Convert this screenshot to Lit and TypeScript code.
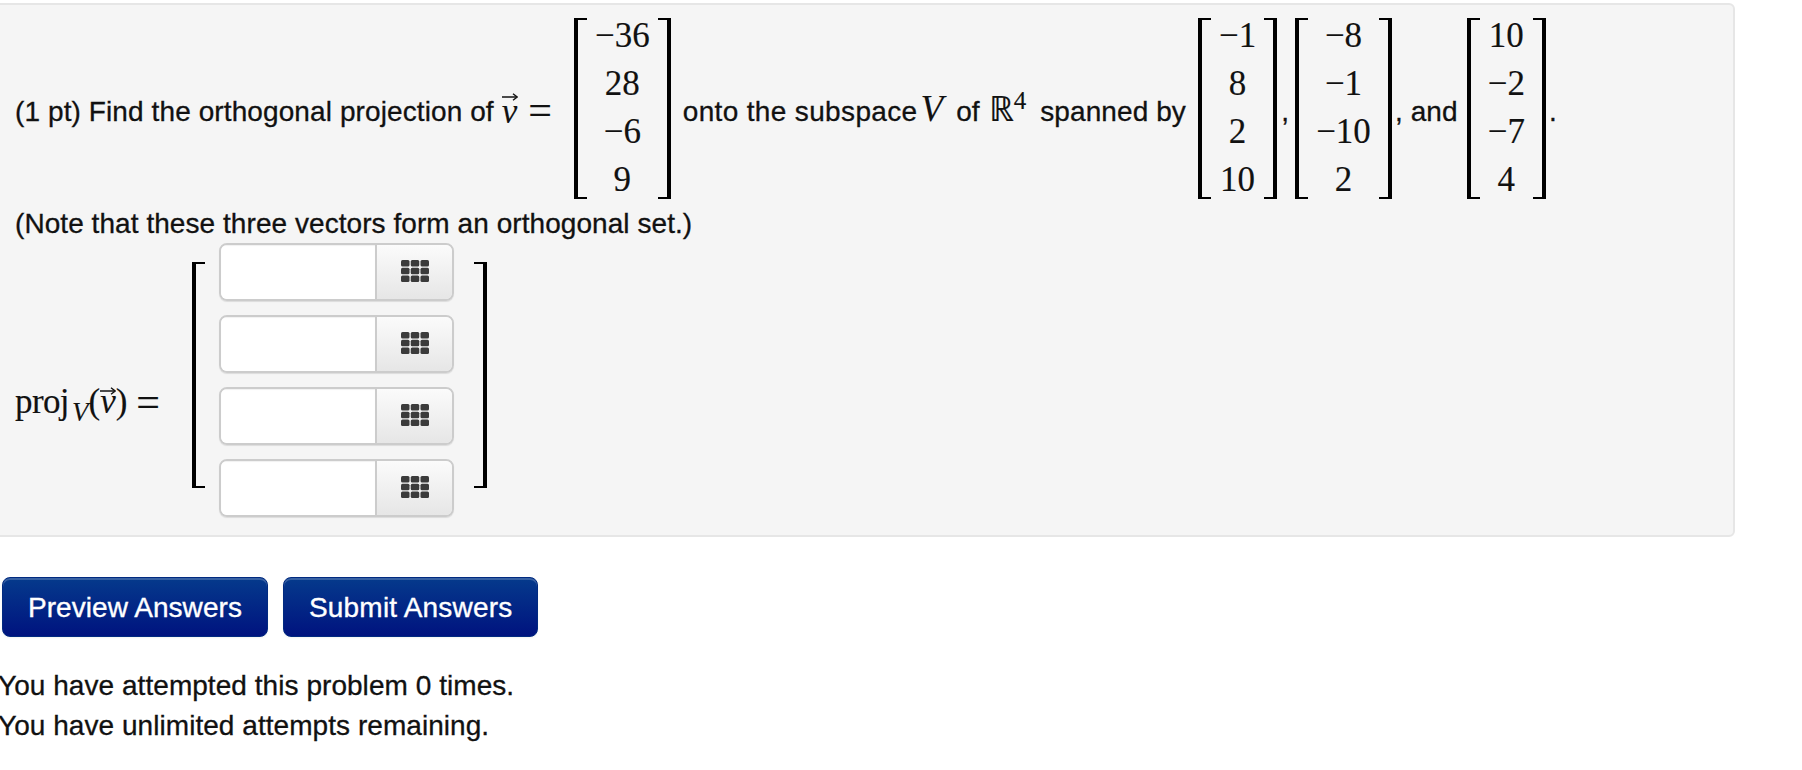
import { LitElement, html, css, svg } from "lit";
import { customElement } from "lit/decorators.js";

const matrix = (rows: string[]) => html`<span class="matrix">
  <span class="br l"></span>
  <span class="rows">${rows.map((r) => html`<span class="cell">${r}</span>`)}</span>
  <span class="br r"></span>
</span>`;

const arrow = html`<svg class="arrow" viewBox="0 0 16 8" aria-hidden="true"><path d="M0 4H14.5" stroke="#111" stroke-width="1.5" fill="none"/><path d="M11 0.8 L15.2 4 L11 7.2" stroke="#111" stroke-width="1.4" fill="none"/></svg>`;

const keypad = html`<svg class="pad" viewBox="0 0 28 22" aria-hidden="true">
  ${[0, 9.75, 19.5].map((x) =>
    [0, 7.75, 15.5].map((y) => svg`<rect x=${x} y=${y} width="8.5" height="6.5" rx="1.5" fill="#3b3b3b"/>`)
  )}
</svg>`;

const answer = html`<div class="group"><div class="input"></div><div class="pick">${keypad}</div></div>`;

@customElement("app-root")
export class AppRoot extends LitElement {
  static styles = css`
    :host {
      display: block;
      font-family: "Liberation Sans", Arial, sans-serif;
      font-size: 28px;
      line-height: 40px;
      letter-spacing: 0.1px;
      color: #111;
      background: #fff;
      height: 770px;
      overflow: hidden;
      -webkit-text-stroke: 0.3px #111;
    }
    .well {
      box-sizing: border-box;
      margin: 3px 0 0 -8px;
      width: 1743px;
      height: 534px;
      padding: 7px 0 0 21px;
      background: #f5f5f5;
      border: 2px solid #e6e6e6;
      border-radius: 6px;
    }
    .line {
      display: flex;
      align-items: center;
    }
    .t {
      box-sizing: content-box;
      height: 40px;
      padding-top: 8px;
      white-space: pre;
    }
    .m {
      font-family: "Liberation Serif", "Times New Roman", serif;
      font-size: 35px;
      line-height: 0;
      letter-spacing: 0;
      -webkit-text-stroke: 0.15px #111;
    }
    .vec {
      position: relative;
      display: inline-block;
      font-style: italic;
      line-height: 40px;
    }
    .arrow {
      position: absolute;
      left: 0;
      top: 1px;
      width: 16px;
      height: 8px;
    }
    .low .arrow {
      top: 5px;
    }
    .eq {
      font-size: 42px;
      vertical-align: -3px;
      line-height: 0;
    }
    .g1 { margin-left: 8px; }
    .g2 { margin-left: 11px; margin-right: 22px; }
    .onto { margin-left: 12px; margin-right: 12px; }
    .wide { letter-spacing: 0.35px; }
    .bigv { font-size: 37px; margin: 0 13px 0 3px; }
    .rr { margin: 0 14px 0 9px; }
    .rr sup {
      font-size: 25px;
      line-height: 0;
      vertical-align: 12px;
    }
    .comma { margin: 0 6px 0 4px; }
    .and { margin: 0 9px 0 3px; }
    .dot { margin-left: 3px; }
    .matrix {
      display: inline-flex;
      align-items: center;
      font-family: "Liberation Serif", "Times New Roman", serif;
      font-size: 35px;
      letter-spacing: 0;
      -webkit-text-stroke: 0.15px #111;
    }
    .rows {
      display: flex;
      flex-direction: column;
      padding: 0 8px;
      text-align: center;
    }
    .cell {
      height: 48px;
      line-height: 48px;
    }
    .br {
      box-sizing: border-box;
      flex: none;
      width: 13px;
      height: 181px;
      border: solid #000;
      border-width: 2px 0;
    }
    .br.l { border-left-width: 4px; }
    .br.r { border-right-width: 4px; }
    .note {
      white-space: pre;
      letter-spacing: 0.06px;
    }
    .answers {
      display: flex;
      align-items: center;
      margin-top: -1px;
    }
    .label {
      flex: none;
      width: 146px;
      margin-top: 44px;
      white-space: pre;
      line-height: 40px;
    }
    .proj {
      letter-spacing: -0.6px;
    }
    .label sub {
      font-size: 27px;
      font-style: italic;
      line-height: 0;
      vertical-align: -8px;
      margin: 0 0 0 3px;
    }
    .label .eq {
      margin-left: 9px;
    }
    .tall {
      box-sizing: border-box;
      flex: none;
      width: 13px;
      height: 226px;
      margin-bottom: 11px;
      border: solid #000;
      border-width: 2px 0;
    }
    .tall.l {
      margin-left: 31px;
      margin-right: 14px;
      border-left-width: 4px;
    }
    .tall.r {
      margin-left: 20px;
      border-right-width: 4px;
    }
    .stack {
      display: flex;
      flex-direction: column;
      gap: 14px;
    }
    .group {
      box-sizing: border-box;
      display: flex;
      width: 235px;
      height: 58px;
      border: 2px solid #ccc;
      border-radius: 8px;
      overflow: hidden;
      box-shadow: 0 1px 1px rgba(0, 0, 0, 0.1);
    }
    .input {
      flex: none;
      width: 154px;
      background: #fff;
      box-shadow: inset 0 1px 1px rgba(0, 0, 0, 0.06);
    }
    .pick {
      flex: 1;
      display: flex;
      align-items: center;
      justify-content: center;
      border-left: 2px solid #ccc;
      background: linear-gradient(to bottom, #fbfbfb, #e6e6e6);
    }
    .pad {
      width: 28px;
      height: 22px;
      margin-bottom: 3px;
    }
    .buttons {
      display: flex;
      gap: 15px;
      margin: 40px 0 0 2px;
    }
    .btn {
      box-sizing: border-box;
      height: 60px;
      padding: 2px 25px 0;
      display: flex;
      align-items: center;
      color: #fff;
      letter-spacing: 0.05px;
      -webkit-text-stroke: 0.35px #fff;
      border-radius: 8px;
      background: linear-gradient(to bottom, #053a8c, #00137f);
      border: 1px solid #012a80;
      box-shadow: inset 0 2px 0 rgba(255, 255, 255, 0.2), 0 1px 2px rgba(0, 0, 0, 0.05);
      white-space: pre;
    }
    .btn + .btn {
      letter-spacing: 0.2px;
    }
    .status {
      margin: 29px 0 0 -2px;
      white-space: pre;
      letter-spacing: 0.05px;
    }
  `;

  render() {
    return html`
      <div class="well">
        <div class="line">
          <span class="t">(1 pt) Find the orthogonal projection of</span>
          <span class="t m g1"><span class="vec">v${arrow}</span></span>
          <span class="t g2"><span class="m eq">=</span></span>
          ${matrix(["−36", "28", "−6", "9"])}
          <span class="t onto"><span class="wide">onto the subspace</span><span class="m bigv"><i>V</i></span>of<span class="m rr">ℝ<sup>4</sup></span>spanned by</span>
          ${matrix(["−1", "8", "2", "10"])}
          <span class="t comma">,</span>
          ${matrix(["−8", "−1", "−10", "2"])}
          <span class="t and">, and</span>
          ${matrix(["10", "−2", "−7", "4"])}
          <span class="t dot">.</span>
        </div>
        <div class="note">(Note that these three vectors form an orthogonal set.)</div>
        <div class="answers">
          <span class="label low m"><span class="proj">proj</span><sub>V</sub>(<span class="vec">v${arrow}</span>)<span class="eq">=</span></span>
          <span class="tall l"></span>
          <div class="stack">${answer}${answer}${answer}${answer}</div>
          <span class="tall r"></span>
        </div>
      </div>
      <div class="buttons">
        <div class="btn">Preview Answers</div>
        <div class="btn">Submit Answers</div>
      </div>
      <div class="status">You have attempted this problem 0 times.<br />You have unlimited attempts remaining.</div>
    `;
  }
}
